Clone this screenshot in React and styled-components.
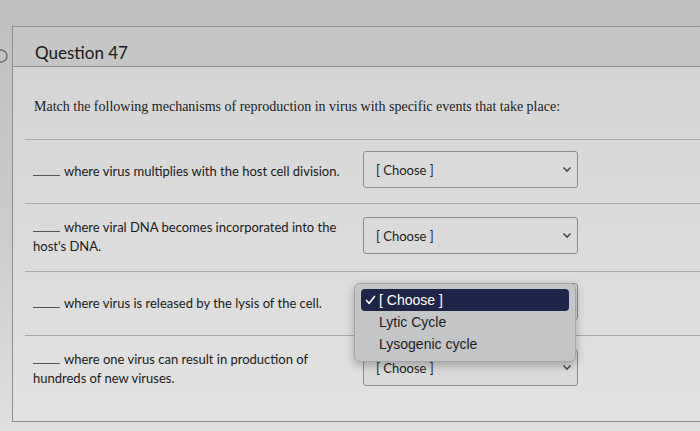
import styled, { createGlobalStyle } from "styled-components";

const GlobalStyle = createGlobalStyle`
  html, body {
    margin: 0;
    padding: 0;
    background: #c4c5c4;
    overflow: hidden;
  }
`;

const rows = [
  { id: 1, text: "where virus multiplies with the host cell division." },
  { id: 2, text: "where viral DNA becomes incorporated into the host's DNA." },
  { id: 3, text: "where virus is released by the lysis of the cell.", open: true },
  { id: 4, text: "where one virus can result in production of hundreds of new viruses." },
];

const options = ["[ Choose ]", "Lytic Cycle", "Lysogenic cycle"];

export default function App() {
  return (
    <>
      <GlobalStyle />
      <Page>
        <Gutter>
          <svg width="12" height="16" viewBox="0 0 12 16">
            <circle cx="1" cy="8" r="6" fill="none" stroke="#6f706f" strokeWidth="1.6" />
          </svg>
        </Gutter>
        <Card>
          <Header>Question 47</Header>
          <Body>
            <Prompt>
              Match the following mechanisms of reproduction in virus with
              specific events that take place:
            </Prompt>
            {rows.map((row) => (
              <Row key={row.id}>
                <Statement>
                  <Blank />
                  {row.text}
                </Statement>
                <SelectWrap>
                  <Select>
                    <Label $hidden={row.open}>[ Choose ]</Label>
                    <svg width="10" height="7" viewBox="0 0 10 7">
                      <path d="M1.5 1.5 L5 5 L8.5 1.5" fill="none" stroke="#4a4b4c" strokeWidth="1.6" />
                    </svg>
                  </Select>
                  {row.open && (
                    <Popup>
                      {options.map((opt, i) => (
                        <Option key={opt} $selected={i === 0}>
                          <Check>
                            {i === 0 && (
                              <svg width="11" height="10" viewBox="0 0 11 10">
                                <path d="M1.5 5.5 L4.2 8.3 L9.5 1.5" fill="none" stroke="#fff" strokeWidth="1.7" strokeLinecap="round" strokeLinejoin="round" />
                              </svg>
                            )}
                          </Check>
                          <span>{opt}</span>
                        </Option>
                      ))}
                    </Popup>
                  )}
                </SelectWrap>
              </Row>
            ))}
          </Body>
        </Card>
      </Page>
    </>
  );
}

const Page = styled.div`
  display: flex;
  align-items: flex-start;
  height: 431px;
  box-sizing: border-box;
  padding-top: 26px;
  background: linear-gradient(180deg, #bebfbe 0%, #cdcecd 60%, #dfe0df 100%);
`;

const Gutter = styled.div`
  flex: none;
  width: 12px;
  padding-top: 22px;
  display: flex;
`;

const Card = styled.div`
  flex: 1;
  margin-right: -30px;
  height: 396px;
  box-sizing: border-box;
  border: 1px solid #8d8e8d;
  border-right: none;
  background: linear-gradient(180deg, #d2d3d2 0%, #dadbda 50%, #e1e2e1 100%);
`;

const Header = styled.div`
  height: 40px;
  display: flex;
  align-items: center;
  padding: 12px 22px 0;
  box-sizing: border-box;
  background: #c5c6c5;
  border-bottom: 1px solid #8d8e8d;
  font-family: Lato, "Liberation Sans", sans-serif;
  font-size: 17px;
  color: #1a1a1a;
`;

const Body = styled.div`
  padding-left: 12px;
`;

const Prompt = styled.p`
  margin: 32px 0 24px 9px;
  font-family: "Liberation Serif", serif;
  font-size: 14px;
  line-height: 16px;
  color: #1c1c1c;
`;

const Row = styled.div`
  display: flex;
  align-items: center;
  gap: 20px;
  padding: 11px 0 15px 8px;
  border-top: 1px solid #a7a8a7;
`;

const Statement = styled.div`
  width: 310px;
  padding-top: 3px;
  font-family: Lato, "Liberation Sans", sans-serif;
  font-size: 13px;
  line-height: 19px;
  color: #1a1a1a;
`;

const Blank = styled.span`
  display: inline-block;
  width: 27px;
  height: 12px;
  margin-right: 4px;
  border-bottom: 1px solid #555;
`;

const SelectWrap = styled.div`
  position: relative;
  width: 215px;
`;

const Select = styled.div`
  height: 37px;
  box-sizing: border-box;
  display: flex;
  align-items: center;
  justify-content: space-between;
  padding: 0 5px 0 12px;
  border: 1px solid #8a8b8a;
  border-radius: 3px;
  background: #d9dad9;
  font-family: Lato, "Liberation Sans", sans-serif;
  font-size: 13px;
  color: #222;
`;

const Label = styled.span`
  visibility: ${(p) => (p.$hidden ? "hidden" : "visible")};
`;

const Popup = styled.div`
  position: absolute;
  top: 0;
  left: -9px;
  width: 222px;
  box-sizing: border-box;
  padding: 5px 6px 6px;
  border: 1px solid #a4a5a6;
  border-radius: 6px;
  background: #c4c5c7;
  box-shadow: 0 3px 10px rgba(0, 0, 0, 0.28);
  z-index: 2;
`;

const Option = styled.div`
  display: flex;
  align-items: center;
  height: 22px;
  padding-left: 4px;
  border-radius: 4px;
  font-family: "Liberation Sans", Arial, sans-serif;
  font-size: 14px;
  color: ${(p) => (p.$selected ? "#ffffff" : "#1d1d1f")};
  background: ${(p) => (p.$selected ? "#1f2548" : "transparent")};
`;

const Check = styled.span`
  flex: none;
  display: flex;
  align-items: center;
  width: 14px;
`;
